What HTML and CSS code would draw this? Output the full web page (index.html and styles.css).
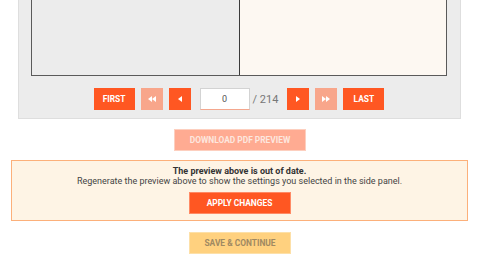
FILE: index.html
```html
<!DOCTYPE html>
<html>
<head>
<meta charset="utf-8">
<link rel="stylesheet" href="styles.css">
</head>
<body>
<div class="viewer">
  <div class="spread">
    <div class="page page-left"></div>
    <div class="page page-right"></div>
  </div>
  <div class="pager">
    <button class="btn btn-text">FIRST</button>
    <button class="btn btn-icon disabled"><svg width="8" height="6" viewBox="0 0 8 6"><path d="M4 0L0 3L4 6Z M8 0L4 3L8 6Z" fill="#fff"/></svg></button>
    <button class="btn btn-icon"><svg width="4" height="6" viewBox="0 0 4 6"><path d="M4 0L0 3L4 6Z" fill="#fff"/></svg></button>
    <input class="page-input" type="text" value="0">
    <span class="page-total">/ 214</span>
    <button class="btn btn-icon"><svg width="4" height="6" viewBox="0 0 4 6"><path d="M0 0L4 3L0 6Z" fill="#fff"/></svg></button>
    <button class="btn btn-icon disabled"><svg width="8" height="6" viewBox="0 0 8 6"><path d="M0 0L4 3L0 6Z M4 0L8 3L4 6Z" fill="#fff"/></svg></button>
    <button class="btn btn-text">LAST</button>
  </div>
</div>
<div class="actions">
  <button class="btn btn-download">DOWNLOAD PDF PREVIEW</button>
</div>
<div class="notice">
  <div class="notice-title">The preview above is out of date.</div>
  <div class="notice-text">Regenerate the preview above to show the settings you selected in the side panel.</div>
  <button class="btn btn-apply">APPLY CHANGES</button>
</div>
<div class="actions save-row">
  <button class="btn btn-save">SAVE &amp; CONTINUE</button>
</div>
</body>
</html>
```
FILE: styles.css
```css
* { box-sizing: border-box; }
html, body { margin: 0; padding: 0; background: #fff; }
body {
  font-family: Roboto, "Liberation Sans", sans-serif;
  color: #333;
  overflow: hidden;
  height: 264px;
}
.viewer {
  margin: -125px 19px 0 18px;
  border: 1px solid #dedede;
  border-top: none;
  background: #ececec;
  padding: 0 13px 8px 12px;
}
.spread {
  display: flex;
  height: 201px;
  border: 1px solid #5a5a5a;
}
.page { flex: 1; }
.page-left { background: #ececec; border-right: 1px solid #3a3a3a; }
.page-right { background: #fdf8f2; }
.pager {
  display: flex;
  justify-content: center;
  align-items: center;
  margin-top: 12px;
  gap: 6px;
}
.btn {
  border: none;
  font-family: Roboto, "Liberation Sans", sans-serif;
  font-weight: 700;
  font-size: 8.4px;
  color: #fff;
  background: #ff5722;
  height: 22px;
  padding: 0;
  display: flex;
  align-items: center;
  justify-content: center;
  cursor: pointer;
}
.btn-text { width: 41px; }
.btn-icon { width: 22px; }
.btn.disabled { background: #f8a68b; }
.page-input {
  width: 50px;
  height: 22px;
  margin-left: 3px;
  border: 1px solid #d3d3d3;
  border-bottom: 1px solid #f4a78e;
  background: #fff;
  text-align: center;
  font-family: Roboto, "Liberation Sans", sans-serif;
  font-size: 9px;
  color: #555;
  padding: 0;
}
.page-total {
  font-size: 11px;
  color: #777;
  margin-left: -3px;
  margin-right: 3px;
}
.actions {
  display: flex;
  justify-content: center;
  margin-top: 10px;
}
.btn-download {
  width: 132px;
  background: #ffab92;
  color: #fde7df;
  border: 1px solid #fdcfbf;
}
.notice {
  margin: 9px 12px 0 11px;
  border: 1px solid #fcb07a;
  background: #fef4e5;
  display: flex;
  flex-direction: column;
  align-items: center;
  padding: 5px 0 6px;
}
.notice-title {
  font-weight: 700;
  font-size: 9px;
  line-height: 10px;
  color: #333;
}
.notice-text {
  font-size: 9px;
  line-height: 10px;
  color: #444;
}
.btn-apply {
  width: 102px;
  margin-top: 6px;
  border: 1px solid #ff8a65;
}
.save-row { margin-top: 11px; }
.btn-save {
  width: 102px;
  background: #ffd17f;
  color: #a08962;
  border: 1px solid #fde0a8;
}
```
